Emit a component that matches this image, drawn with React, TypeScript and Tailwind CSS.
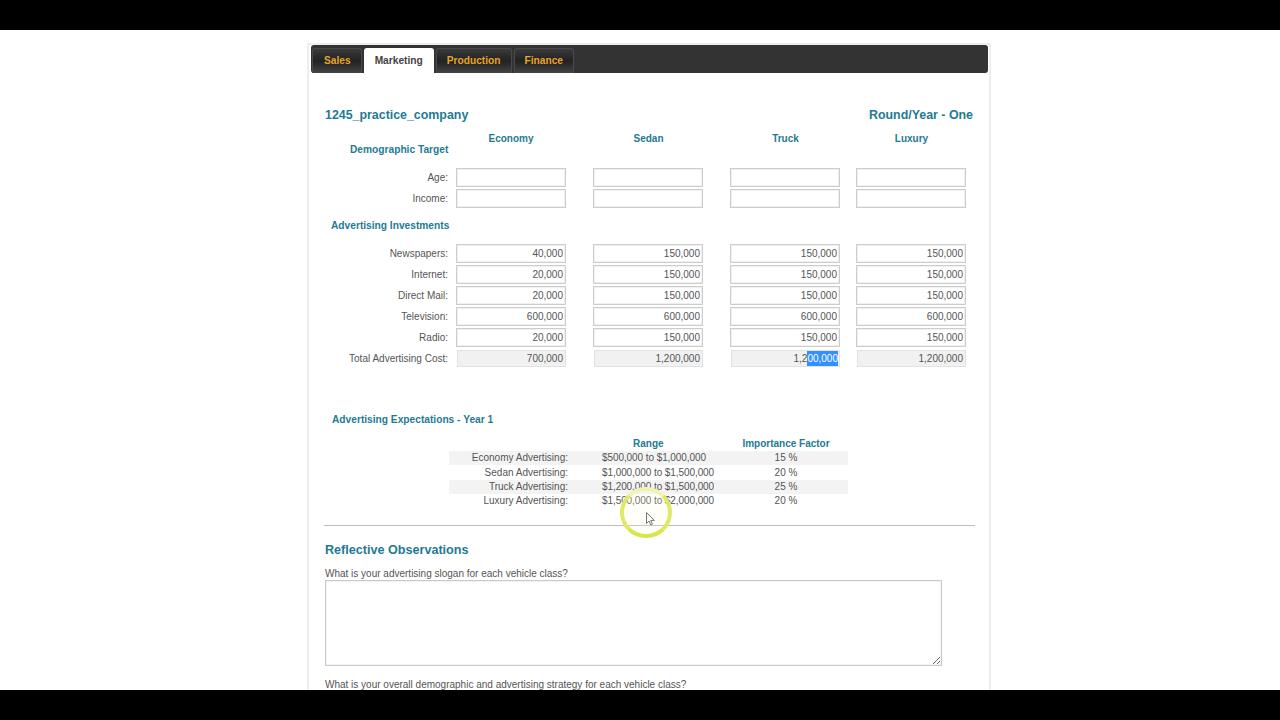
import React from "react";

const inputClass =
  "h-[19px] w-[110px] border border-[#cdcdcd] bg-white px-[2px] text-right text-[10px] leading-[15px] text-[#555] shadow-[inset_0_0_0_1px_#f0f0f0] outline-none";

const Field = ({ value, className = "" }: { value?: string; className?: string }) => (
  <input readOnly value={value ?? ""} className={`${inputClass} ${className}`} />
);

const gapAfter = ["mr-[27px]", "mr-[27px]", "mr-[16px]", ""];

const Row = ({ label, values }: { label: string; values?: string[] }) => (
  <div className="flex h-[21px] items-center">
    <div className="w-[124px] text-right text-[10px] text-[#555]">{label}</div>
    <div className="ml-[8px] flex">
      {[0, 1, 2, 3].map((i) => (
        <Field key={i} value={values ? values[i] : ""} className={gapAfter[i]} />
      ))}
    </div>
  </div>
);

const TotalCell = ({ children, className = "" }: { children: React.ReactNode; className?: string }) => (
  <div
    className={`flex h-[17px] w-[109px] items-center justify-end border border-[#e2e2e2] bg-[#f1f1f1] px-[2px] text-[10px] text-[#555] ${className}`}
  >
    {children}
  </div>
);

const expectations = [
  ["Economy Advertising:", "$500,000 to $1,000,000", "15 %"],
  ["Sedan Advertising:", "$1,000,000 to $1,500,000", "20 %"],
  ["Truck Advertising:", "$1,200,000 to $1,500,000", "25 %"],
  ["Luxury Advertising:", "$1,500,000 to $2,000,000", "20 %"],
];

export default function App() {
  return (
    <div className="relative flex h-screen flex-col overflow-hidden bg-white font-['Liberation_Sans',Arial,sans-serif]">
      <div className="h-[30px] shrink-0 bg-black" />

      <main className="flex-1 overflow-hidden">
        <div className="ml-[307px] mt-[13px] h-[700px] w-[684px] border-2 border-b-0 border-[#eeeeee] pl-[2px] pr-px">
          {/* Tabs */}
          <div className="flex h-[28px] items-end gap-[2px] rounded-[3px] bg-[#333333] pl-px">
            <div className="flex h-[25px] items-center rounded-t-[3px] border border-b-0 border-[#4a4a4a] bg-gradient-to-b from-[#3a3a3a] via-[#222] to-[#444] pl-[11px] pr-[10px] text-[10.2px] font-bold text-[#e8a428]">
              Sales
            </div>
            <div className="flex h-[25px] items-center rounded-t-[3px] bg-white px-[11px] text-[10.2px] font-bold text-[#444]">
              Marketing
            </div>
            <div className="flex h-[25px] items-center rounded-t-[3px] border border-b-0 border-[#4a4a4a] bg-gradient-to-b from-[#3a3a3a] via-[#222] to-[#444] px-[10px] text-[10.2px] font-bold text-[#e8a428]">
              Production
            </div>
            <div className="flex h-[25px] items-center rounded-t-[3px] border border-b-0 border-[#4a4a4a] bg-gradient-to-b from-[#3a3a3a] via-[#222] to-[#444] px-[10px] text-[10.2px] font-bold text-[#e8a428]">
              Finance
            </div>
          </div>

          <div className="px-[13px]">
            {/* Title */}
            <div className="ml-px mt-[34px] flex items-center justify-between pr-[2px] text-[12.4px] font-bold leading-[16px] text-[#1f7a94]">
              <span>1245_practice_company</span>
              <span>Round/Year - One</span>
            </div>

            {/* Column heads */}
            <div className="mt-[9px] h-[35px] text-[10px] font-bold text-[#1f7a94]">
              <div className="flex pl-[132px] leading-[14px]">
                <div className="mr-[27px] w-[110px] text-center">Economy</div>
                <div className="mr-[26px] w-[111px] text-center">Sedan</div>
                <div className="mr-[15px] w-[111px] text-center">Truck</div>
                <div className="w-[111px] text-center">Luxury</div>
              </div>
              <div className="mt-[-3px] pl-[26px] text-[10.2px] leading-[14px]">Demographic Target</div>
            </div>

            <Row label="Age:" />
            <Row label="Income:" />

            <div className="mt-[10px] h-[24px] pl-[7px] text-[10.2px] font-bold leading-[14px] text-[#1f7a94]">
              Advertising Investments
            </div>

            <Row label="Newspapers:" values={["40,000", "150,000", "150,000", "150,000"]} />
            <Row label="Internet:" values={["20,000", "150,000", "150,000", "150,000"]} />
            <Row label="Direct Mail:" values={["20,000", "150,000", "150,000", "150,000"]} />
            <Row label="Television:" values={["600,000", "600,000", "600,000", "600,000"]} />
            <Row label="Radio:" values={["20,000", "150,000", "150,000", "150,000"]} />

            <div className="flex h-[20px] items-center">
              <div className="w-[124px] text-right text-[10px] text-[#555]">Total Advertising Cost:</div>
              <div className="ml-[9px] flex">
                <TotalCell className="mr-[28px]">700,000</TotalCell>
                <TotalCell className="mr-[28px]">1,200,000</TotalCell>
                <TotalCell className="mr-[17px] pr-px">
                  1,2<span className="bg-[#3390ff] text-white">00,000</span>
                </TotalCell>
                <TotalCell>1,200,000</TotalCell>
              </div>
            </div>

            {/* Expectations */}
            <div className="mt-[45px] pl-[8px] text-[10.2px] font-bold leading-[14px] text-[#1f7a94]">
              Advertising Expectations - Year 1
            </div>

            <div className="ml-[125px] mt-[10px] w-[399px] text-[10px] leading-[14px] text-[#555]">
              <div className="flex h-[14px] font-bold text-[#1f7a94]">
                <div className="w-[120px]" />
                <div className="w-[173px] pl-[64px]">Range</div>
                <div className="w-[88px] whitespace-nowrap text-center">Importance Factor</div>
              </div>
              {expectations.map((e, i) => (
                <div key={e[0]} className={`flex h-[14.4px] items-center ${i % 2 === 0 ? "bg-[#f3f3f3]" : ""}`}>
                  <div className="w-[119px] text-right">{e[0]}</div>
                  <div className="ml-[34px] w-[140px] tracking-[-0.08px]">{e[1]}</div>
                  <div className="w-[88px] text-center">{e[2]}</div>
                </div>
              ))}
            </div>

            <hr className="mt-[16px] w-[651px] border-0 border-t border-[#bdbdbd]" />

            <h2 className="ml-px mt-[16px] text-[12.6px] font-bold leading-[16px] text-[#1f7a94]">
              Reflective Observations
            </h2>

            <p className="ml-px mt-[9px] text-[10px] leading-[14px] text-[#555]">
              What is your advertising slogan for each vehicle class?
            </p>
            <textarea
              readOnly
              className="ml-px mt-[-1px] block h-[86px] w-[617px] border border-[#c9c9c9] bg-white shadow-[inset_0_0_0_1px_#f3f3f3] outline-none"
            />
            <p className="ml-px mt-[12px] text-[10px] leading-[14px] text-[#555]">
              What is your overall demographic and advertising strategy for each vehicle class?
            </p>
          </div>
        </div>
      </main>

      <div className="relative z-10 h-[30px] shrink-0 bg-black" />

      {/* Screen recording cursor highlight */}
      <div className="absolute left-[620px] top-[487px] h-[51px] w-[52px] rounded-full border-[4px] border-b-[#d8e64a] border-l-[#dfe965] border-r-[#dfe965] border-t-[#f0f4b0] bg-[#ffffe0]/20 blur-[0.7px]" />
      <svg className="absolute left-[645px] top-[511px]" width="11" height="15" viewBox="0 0 11 15">
        <path d="M1.5 1.5 L1.5 12.5 L4 10 L5.8 14 L7.4 13.2 L5.7 9.4 L9.4 9.4 Z" fill="#fff" stroke="#777" strokeWidth="1" />
      </svg>
    </div>
  );
}
